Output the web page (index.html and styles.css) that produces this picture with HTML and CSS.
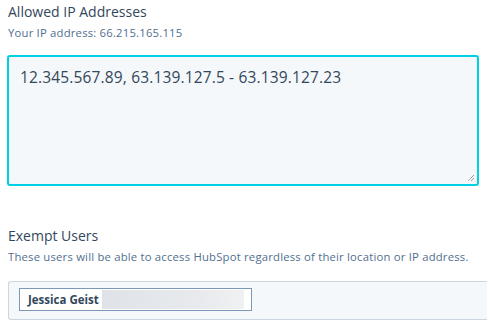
FILE: index.html
```html
<!DOCTYPE html>
<html>
<head>
<meta charset="utf-8">
<link rel="stylesheet" href="styles.css">
</head>
<body>
<div class="page">
  <section class="field">
    <h2 class="label">Allowed IP Addresses</h2>
    <p class="help">Your IP address: 66.215.165.115</p>
    <div class="textarea">
      <span class="value">12.345.567.89, 63.139.127.5 - 63.139.127.23</span>
      <svg class="grip" width="8" height="8" viewBox="0 0 8 8"><path d="M7 1L1 7M7 4L4 7" stroke="#555" stroke-width="0.8" stroke-dasharray="1 0.6" fill="none"/></svg>
    </div>
  </section>
  <section class="field exempt">
    <h2 class="label">Exempt Users</h2>
    <p class="help">These users will be able to access HubSpot regardless of their location or IP address.</p>
    <div class="tagbox">
      <div class="tag"><span class="name">Jessica Geist</span><span class="blur"></span></div>
    </div>
  </section>
</div>
</body>
</html>
```
FILE: styles.css
```css
html, body { margin: 0; padding: 0; background: #fff; }
body { font-family: "Open Sans", "Noto Sans", sans-serif; color: #33475b; }
.page { padding: 2px 0 0 8px; }
.label { margin: 0; font-size: 14px; font-weight: 400; line-height: 19px; color: #33475b; }
.help { margin: 5px 0 0; font-size: 11.3px; letter-spacing: 0.2px; line-height: 14px; color: #516f90; white-space: nowrap; }
.textarea {
  position: relative;
  margin: 15px 8px 0 -1px;
  border: 2px solid #00d0e4;
  border-radius: 3px;
  background: #f5f8fa;
  padding: 9px 11px;
  box-sizing: border-box;
  height: 131px;
  width: 472px;
}
.value { font-size: 15.5px; letter-spacing: 0.15px; line-height: 20px; color: #33475b; }
.grip { position: absolute; right: 2px; bottom: 2px; }
.exempt { margin-top: 40px; }
.tagbox {
  margin-top: 17px;
  height: 39px;
  box-sizing: border-box;
  border: 1px solid #cbd6e2;
  border-right: none;
  border-radius: 3px 0 0 3px;
  background: #f5f8fa;
  padding: 6px 10px;
}
.tag {
  display: flex; align-items: center;
  width: 233px; height: 23px; box-sizing: border-box;
  border: 1px solid #7c98b6;
  background: #fff;
  padding: 0 7px 0 8px;
}
.name { font-size: 11.5px; font-weight: 700; color: #33475b; white-space: nowrap; }
.blur { flex: 1; height: 19px; margin-left: 3px; background: linear-gradient(90deg, #dfe3e8, #e8eaed 70%, #f0f1f3); }
```
